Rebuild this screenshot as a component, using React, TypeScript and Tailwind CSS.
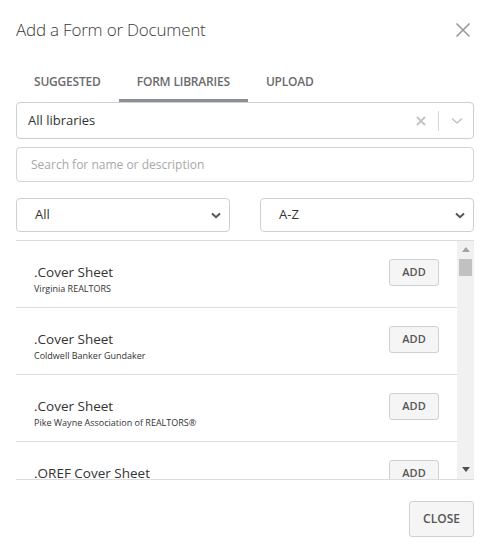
import { useState } from "react";

const forms = [
  { name: ".Cover Sheet", lib: "Virginia REALTORS" },
  { name: ".Cover Sheet", lib: "Coldwell Banker Gundaker" },
  { name: ".Cover Sheet", lib: "Pike Wayne Association of REALTORS®" },
  { name: ".OREF Cover Sheet", lib: "Oregon Real Estate Forms" },
];

const tabs = ["SUGGESTED", "FORM LIBRARIES", "UPLOAD"];

function Chevron() {
  return (
    <svg width="10" height="7" viewBox="0 0 10 7" className="text-[#555]">
      <path d="M1 1.5 5 5.2 9 1.5" fill="none" stroke="currentColor" strokeWidth="2" />
    </svg>
  );
}

export default function App() {
  const [tab, setTab] = useState(1);

  return (
    <div
      className="w-[492px] h-[555px] bg-white pl-4 pr-[18px] text-[#333] overflow-hidden"
      style={{ fontFamily: '"Open Sans", "Noto Sans", sans-serif' }}
    >
      {/* Header */}
      <div className="flex items-center justify-between h-[60px]">
        <h1 className="text-[17px] font-light text-[#3a3a3a] tracking-[-0.2px]">Add a Form or Document</h1>
        <button className="mr-[3px] text-[#999]">
          <svg width="16" height="16" viewBox="0 0 16 16">
            <path d="M1.5 1.5 14.5 14.5M14.5 1.5 1.5 14.5" stroke="currentColor" strokeWidth="1.6" />
          </svg>
        </button>
      </div>

      {/* Tabs */}
      <div className="flex h-[42px]">
        {tabs.map((t, i) => (
          <button
            key={t}
            onClick={() => setTab(i)}
            className={`px-[18px] text-[12px] font-semibold tracking-[-0.2px] text-[#6b6b6b] border-b-[3px] pt-[4px] ${
              tab === i ? "border-[#8a9097]" : "border-transparent"
            }`}
          >
            {t}
          </button>
        ))}
      </div>

      {/* Library select */}
      <div className="flex items-center h-[37px] border border-[#cfcfcf] rounded-[4px] pl-[11px] pr-[10px]">
        <span className="flex-1 text-[13px] text-[#333]">All libraries</span>
        <svg width="10" height="10" viewBox="0 0 10 10" className="text-[#c4c4c4]">
          <path d="M1 1 9 9M9 1 1 9" stroke="currentColor" strokeWidth="2" />
        </svg>
        <span className="mx-[12px] w-px h-[20px] bg-[#d6d6d6]" />
        <svg width="12" height="8" viewBox="0 0 12 8" className="text-[#c4c4c4]">
          <path d="M1 1.5 6 6 11 1.5" fill="none" stroke="currentColor" strokeWidth="1.6" />
        </svg>
      </div>

      {/* Search */}
      <div className="mt-[8px] flex items-center h-[35px] border border-[#d4d4d4] rounded-[4px] px-[14px]">
        <span className="text-[12px] text-[#a8a8a8]">Search for name or description</span>
      </div>

      {/* Filters */}
      <div className="mt-[16px] flex justify-between">
        <div className="w-[214px] h-[34px] flex items-center justify-between border border-[#cfcfcf] rounded-[4px] pl-[18px] pr-[8px]">
          <span className="text-[13px] text-[#333]">All</span>
          <Chevron />
        </div>
        <div className="w-[214px] h-[34px] flex items-center justify-between border border-[#cfcfcf] rounded-[4px] pl-[18px] pr-[8px]">
          <span className="text-[13px] text-[#333]">A-Z</span>
          <Chevron />
        </div>
      </div>

      {/* List */}
      <div className="mt-[8px] flex h-[240px] border-t border-b border-[#dcdcdc] overflow-hidden">
        <div className="flex-1 overflow-hidden">
          {forms.map((f, i) => (
            <div
              key={i}
              className="flex items-center justify-between h-[67px] pl-[18px] pr-[18px] border-b border-[#dcdcdc] pt-[10px]"
            >
              <div className="flex flex-col">
                <span className="text-[13.5px] leading-[20px] text-[#333]">{f.name}</span>
                <span className="text-[9px] leading-[14px] text-[#333]">{f.lib}</span>
              </div>
              <button className="w-[50px] h-[27px] mb-[13px] border border-[#cfcfcf] rounded-[3px] bg-[#f5f5f5] text-[11px] font-semibold text-[#555]">
                ADD
              </button>
            </div>
          ))}
        </div>
        {/* Scrollbar */}
        <div className="w-[17px] bg-[#f1f1f1] flex flex-col items-center">
          <svg width="8" height="5" viewBox="0 0 8 5" className="mt-[6px] text-[#a3a3a3]">
            <path d="M0 5 4 0 8 5Z" fill="currentColor" />
          </svg>
          <div className="mt-[7px] w-[13px] h-[17px] bg-[#c1c1c1]" />
          <div className="flex-1" />
          <svg width="8" height="5" viewBox="0 0 8 5" className="mb-[7px] text-[#505050]">
            <path d="M0 0 4 5 8 0Z" fill="currentColor" />
          </svg>
        </div>
      </div>

      {/* Footer */}
      <div className="mt-[21px] flex justify-end">
        <button className="w-[65px] h-[36px] border border-[#cfcfcf] rounded-[3px] bg-[#f5f5f5] text-[12px] font-semibold text-[#555]">
          CLOSE
        </button>
      </div>
    </div>
  );
}
